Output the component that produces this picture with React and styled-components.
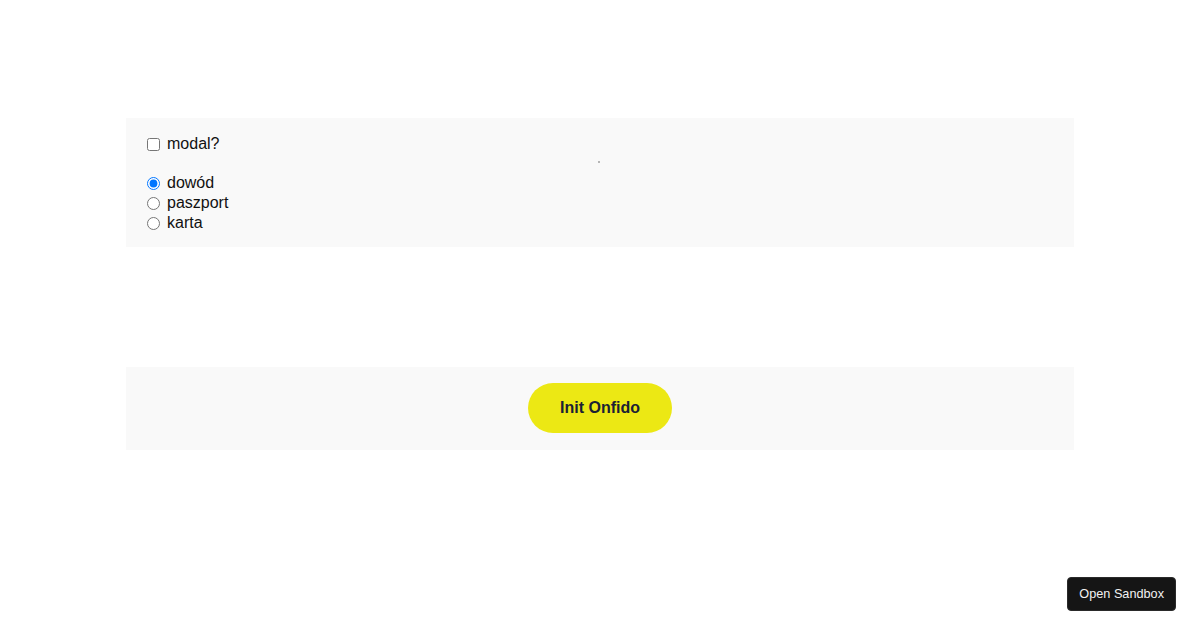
import React from 'react'
import styled, { createGlobalStyle } from 'styled-components'

const GlobalStyle = createGlobalStyle`
  html, body {
    margin: 0;
    padding: 0;
    background: #ffffff;
    font-family: "Liberation Sans", Arial, sans-serif;
    color: #111;
  }
`;

const Page = styled.main`
  display: flex;
  flex-direction: column;
  align-items: center;
  padding-top: 118px;
  gap: 120px;
`;

const Panel = styled.section`
  position: relative;
  width: 948px;
  box-sizing: border-box;
  background: #f9f9f9;
  padding: ${p => p.$center ? '16px 20px 17px' : '16px 21px 14px'};
  display: flex;
  flex-direction: column;
  align-items: ${p => p.$center ? 'center' : 'flex-start'};
`;

const Option = styled.label`
  display: flex;
  align-items: center;
  gap: 7px;
  height: 20px;
  font-size: 16px;
  line-height: 20px;
  color: #111;
  margin-bottom: ${p => p.$gap ? '19px' : '0'};

  input {
    margin: 0;
    width: 13px;
    height: 13px;
  }
`;

const Dot = styled.span`
  position: absolute;
  left: 472px;
  top: 43px;
  width: 2px;
  height: 2px;
  background: #9a9a9a;
  opacity: 0.7;
`;

const InitButton = styled.button`
  height: 50px;
  padding: 0 32px;
  border: none;
  border-radius: 25px;
  background: #ece814;
  color: #1b2134;
  font-family: "Liberation Sans", Arial, sans-serif;
  font-size: 16px;
  font-weight: 700;
  cursor: pointer;
`;

const SandboxButton = styled.a`
  position: fixed;
  right: 24px;
  bottom: 19px;
  height: 34px;
  padding: 0 11px;
  display: flex;
  align-items: center;
  border-radius: 4px;
  background: #151515;
  border: 1px solid #2a2a2a;
  box-sizing: border-box;
  color: #f2f2f2;
  font-size: 12.7px;
  text-decoration: none;
`;

export default function App() {
  return (
    <>
      <GlobalStyle />
      <Page>
        <Panel>
          <Option $gap>
            <input type="checkbox" />
            modal?
          </Option>
          <Option>
            <input type="radio" name="doc" defaultChecked />
            dowód
          </Option>
          <Option>
            <input type="radio" name="doc" />
            paszport
          </Option>
          <Option>
            <input type="radio" name="doc" />
            karta
          </Option>
          <Dot />
        </Panel>
        <Panel $center>
          <InitButton>Init Onfido</InitButton>
        </Panel>
      </Page>
      <SandboxButton href="#">Open Sandbox</SandboxButton>
    </>
  );
}
